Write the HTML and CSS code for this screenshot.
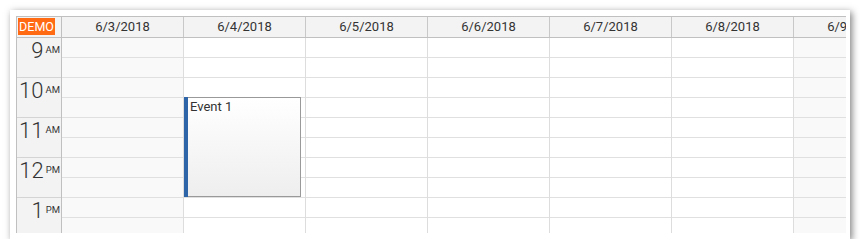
FILE: index.html
```html
<!DOCTYPE html>
<html>
<head>
<meta charset="utf-8">
<link rel="stylesheet" href="styles.css">
</head>
<body>
<div class="frame">
  <div class="cal">
    <div class="head">
      <div class="corner"><span class="demo">DEMO</span></div>
      <div class="dh">6/3/2018</div>
      <div class="dh">6/4/2018</div>
      <div class="dh">6/5/2018</div>
      <div class="dh">6/6/2018</div>
      <div class="dh">6/7/2018</div>
      <div class="dh">6/8/2018</div>
      <div class="dh">6/9/2018</div>
    </div>
    <div class="body">
      <div class="times">
        <div class="hour"><span class="hn">9</span><span class="ap">AM</span></div>
        <div class="hour"><span class="hn">10</span><span class="ap">AM</span></div>
        <div class="hour"><span class="hn">11</span><span class="ap">AM</span></div>
        <div class="hour"><span class="hn">12</span><span class="ap">PM</span></div>
        <div class="hour"><span class="hn">1</span><span class="ap">PM</span></div>
      </div>
      <div class="day off">
        <div class="c"></div><div class="c"></div><div class="c"></div><div class="c"></div><div class="c"></div><div class="c"></div><div class="c"></div><div class="c"></div><div class="c"></div><div class="c"></div>
      </div>
      <div class="day">
        <div class="c"></div><div class="c"></div><div class="c"></div><div class="c"></div><div class="c"></div><div class="c"></div><div class="c"></div><div class="c"></div><div class="c"></div><div class="c"></div>
        <div class="event"><div class="bar"></div><div class="ebox">Event 1</div></div>
      </div>
      <div class="day">
        <div class="c"></div><div class="c"></div><div class="c"></div><div class="c"></div><div class="c"></div><div class="c"></div><div class="c"></div><div class="c"></div><div class="c"></div><div class="c"></div>
      </div>
      <div class="day">
        <div class="c"></div><div class="c"></div><div class="c"></div><div class="c"></div><div class="c"></div><div class="c"></div><div class="c"></div><div class="c"></div><div class="c"></div><div class="c"></div>
      </div>
      <div class="day">
        <div class="c"></div><div class="c"></div><div class="c"></div><div class="c"></div><div class="c"></div><div class="c"></div><div class="c"></div><div class="c"></div><div class="c"></div><div class="c"></div>
      </div>
      <div class="day">
        <div class="c"></div><div class="c"></div><div class="c"></div><div class="c"></div><div class="c"></div><div class="c"></div><div class="c"></div><div class="c"></div><div class="c"></div><div class="c"></div>
      </div>
      <div class="day off">
        <div class="c"></div><div class="c"></div><div class="c"></div><div class="c"></div><div class="c"></div><div class="c"></div><div class="c"></div><div class="c"></div><div class="c"></div><div class="c"></div>
      </div>
    </div>
  </div>
</div>
</body>
</html>
```

FILE: styles.css
```css
html, body {
  margin: 0;
  padding: 0;
  background: #ffffff;
}
body {
  font-family: Roboto, "Liberation Sans", sans-serif;
  color: #333333;
}
.frame {
  margin: 10px 0 0 10px;
  width: 840px;
  height: 229px;
  box-sizing: border-box;
  padding: 6px 4px 6px 6px;
  background: #ffffff;
  box-shadow: 2px 2px 7px rgba(0, 0, 0, 0.5);
}
.cal {
  width: 830px;
  height: 217px;
  box-sizing: border-box;
  border-left: 1px solid #c0c0c0;
  border-top: 1px solid #c0c0c0;
  overflow: hidden;
  display: flex;
  flex-direction: column;
}
.head {
  display: flex;
  flex: none;
  height: 21px;
  box-sizing: border-box;
  border-bottom: 1px solid #c0c0c0;
  background: #f3f3f3;
}
.corner {
  flex: none;
  width: 45px;
  box-sizing: border-box;
  border-right: 1px solid #c0c0c0;
  padding: 1px 0 0 1px;
}
.demo {
  display: flex;
  align-items: center;
  justify-content: center;
  width: 37px;
  height: 17px;
  background: #ff6a13;
  color: #ffffff;
  font-size: 12.5px;
  line-height: 17px;
}
.dh {
  flex: none;
  width: 122px;
  box-sizing: border-box;
  border-right: 1px solid #c8c8c8;
  text-align: center;
  font-size: 13px;
  line-height: 20px;
  white-space: nowrap;
}
.body {
  display: flex;
  flex: none;
}
.times {
  flex: none;
  width: 45px;
  box-sizing: border-box;
  border-right: 1px solid #c0c0c0;
  background: #f3f3f3;
}
.hour {
  height: 40px;
  box-sizing: border-box;
  border-bottom: 1px solid #d4d4d4;
  display: flex;
  justify-content: flex-end;
  align-items: flex-start;
  padding: 2px 1px 0 0;
}
.hn {
  font-size: 22px;
  line-height: 22px;
  font-weight: 300;
}
.ap {
  font-size: 9.5px;
  line-height: 10px;
  margin: 5px 0 0 2px;
}
.day {
  flex: none;
  width: 122px;
  box-sizing: border-box;
  border-right: 1px solid #dddddd;
  position: relative;
  background: #ffffff;
}
.day.off {
  background: #f9f9f9;
}
.c {
  height: 20px;
  box-sizing: border-box;
  border-bottom: 1px solid #e0e0e0;
}
.event {
  position: absolute;
  left: 0;
  top: 59px;
  width: 117px;
  height: 100px;
  display: flex;
}
.bar {
  flex: none;
  width: 4px;
  background: #2e65a8;
}
.ebox {
  flex: 1;
  box-sizing: border-box;
  border: 1px solid #999999;
  border-left: none;
  background: linear-gradient(to bottom, #ffffff, #eeeeee);
  font-size: 13px;
  line-height: 15px;
  padding: 1px 0 0 2px;
  color: #333333;
}
```
